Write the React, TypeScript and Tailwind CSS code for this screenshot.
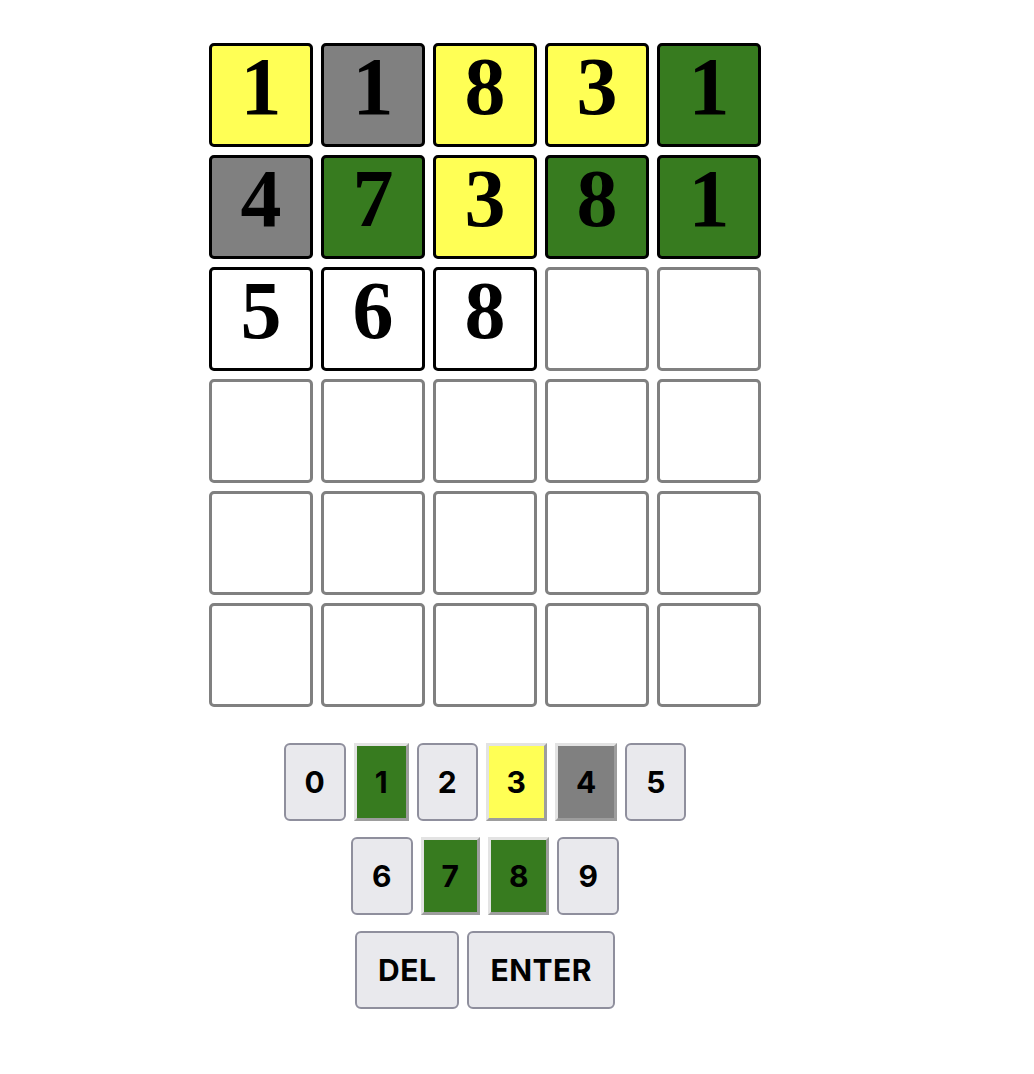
import React from "react"

type State = "correct" | "present" | "absent" | "filled" | "empty"

const rows: { d: string; s: State }[][] = [
  [
    { d: "1", s: "present" },
    { d: "1", s: "absent" },
    { d: "8", s: "present" },
    { d: "3", s: "present" },
    { d: "1", s: "correct" },
  ],
  [
    { d: "4", s: "absent" },
    { d: "7", s: "correct" },
    { d: "3", s: "present" },
    { d: "8", s: "correct" },
    { d: "1", s: "correct" },
  ],
  [
    { d: "5", s: "filled" },
    { d: "6", s: "filled" },
    { d: "8", s: "filled" },
    { d: "", s: "empty" },
    { d: "", s: "empty" },
  ],
  ...Array.from({ length: 3 }, () => Array.from({ length: 5 }, () => ({ d: "", s: "empty" as State }))),
]

const tileClass: Record<State, string> = {
  correct: "bg-[#377b1f] border-black",
  present: "bg-[#ffff55] border-black",
  absent: "bg-[#808080] border-black",
  filled: "bg-white border-black",
  empty: "bg-white border-[#808080]",
}

const keyState: Record<string, State | undefined> = {
  "1": "correct",
  "3": "present",
  "4": "absent",
  "7": "correct",
  "8": "correct",
}

const keyBg: Record<string, string> = {
  correct: "bg-[#377b1f]",
  present: "bg-[#ffff55]",
  absent: "bg-[#808080]",
}

function Key({ label, wide }: { label: string; wide?: boolean }) {
  const s = keyState[label]
  if (s) {
    return (
      <button
        className={`h-[78px] px-[18px] border-[3px] border-t-[#e3e3e3] border-l-[#e3e3e3] border-b-[#9d9d9d] border-r-[#9d9d9d] text-[30px] font-bold text-black ${keyBg[s]}`}
      >
        {label}
      </button>
    )
  }
  return (
    <button
      className={`h-[78px] ${wide ? "px-[21px] tracking-[0.5px]" : "px-[19px]"} rounded-[6px] border-2 border-[#8f8f9d] bg-[#e9e9ed] text-[30px] font-bold text-black`}
    >
      {label}
    </button>
  )
}

export default function App() {
  return (
    <div className="w-[970px] min-h-[1074px] bg-white flex flex-col items-center pt-[43px]" style={{ fontFamily: "Inter, 'Noto Sans', sans-serif" }}>
      <div className="flex flex-col gap-2">
        {rows.map((row, i) => (
          <div key={i} className="flex gap-2">
            {row.map((t, j) => (
              <div
                key={j}
                className={`w-[104px] h-[104px] border-[3px] rounded-[5px] flex items-center justify-center text-[82px] font-bold text-black leading-none pb-[16px] ${tileClass[t.s]}`}
                style={{ fontFamily: "'Liberation Serif', 'Times New Roman', serif" }}
              >
                {t.d}
              </div>
            ))}
          </div>
        ))}
      </div>

      <div className="mt-9 flex flex-col items-center gap-4">
        <div className="flex gap-2">
          {["0", "1", "2", "3", "4", "5"].map((k) => (
            <Key key={k} label={k} />
          ))}
        </div>
        <div className="flex gap-2">
          {["6", "7", "8", "9"].map((k) => (
            <Key key={k} label={k} />
          ))}
        </div>
        <div className="flex gap-2">
          <Key label="DEL" wide />
          <Key label="ENTER" wide />
        </div>
      </div>
    </div>
  )
}
